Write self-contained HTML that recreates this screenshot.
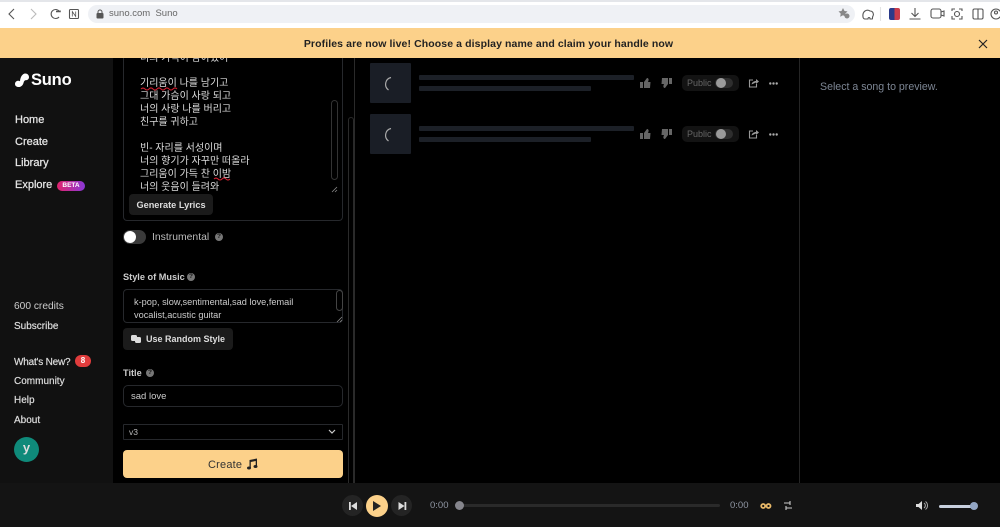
<!DOCTYPE html>
<html><head><meta charset="utf-8"><style>
*{box-sizing:border-box;margin:0;padding:0}
html,body{width:1000px;height:527px;overflow:hidden;background:#000}
body{position:relative;font-family:"Liberation Sans","Noto Sans CJK KR",sans-serif;color:#e8e8e8}
#w{position:absolute;left:0;top:0;width:1000px;height:527px;filter:blur(.3px)}
.a{position:absolute}
.t{position:absolute;white-space:nowrap;line-height:14px}
.nav{font-size:11px;color:#e6e6e6;-webkit-text-stroke:.25px #e6e6e6}
.nav2{font-size:10px;color:#ddd;-webkit-text-stroke:.2px #ddd}
.ly{position:absolute;left:140px;font-size:10px;color:#ddd;white-space:nowrap;line-height:13px}
.box{position:absolute;border:1px solid #26282c;border-radius:4px}
.btn{position:absolute;background:#1b1b1b;border-radius:4px;font-size:9.200px;font-weight:bold;color:#ddd;text-align:center}
.q{position:absolute;width:8px;height:8px;border-radius:50%;background:#777;color:#111;font-size:6.500px;line-height:8px;text-align:center;font-weight:bold}
.sk{position:absolute;background:#1c2027;border-radius:1px}
</style></head><body><div id="w">

<!-- lyrics (under the banner) -->
<div class="a" style="left:123px;top:58px;width:220px;height:163px;border:1px solid #26282c;border-top:0;border-radius:0 0 4px 4px"></div>
<div class="ly" style="top:52px">너의 기억이 남아있어</div>
<div class="ly" style="top:77px">기리움이 나를 남기고</div>
<div class="ly" style="top:90px">그대 가슴이 사랑 되고</div>
<div class="ly" style="top:103px">너의 사랑 나를 버리고</div>
<div class="ly" style="top:116px">친구를 귀하고</div>
<div class="ly" style="top:142px">빈- 자리를 서성이며</div>
<div class="ly" style="top:155px">너의 향기가 자꾸만 떠올라</div>
<div class="ly" style="top:168px">그리움이 가득 찬 이밤</div>
<div class="ly" style="top:181px">너의 웃음이 들려와</div>
<svg class="a" style="left:140px;top:87px" width="38" height="4" fill="none" stroke="#d02030" stroke-width="1.100"><path d="M1 2q2-2 4 0t4 0 4 0 4 0 4 0 4 0 4 0 4 0 4 0"/></svg>
<svg class="a" style="left:213px;top:177px" width="20" height="4" fill="none" stroke="#d02030" stroke-width="1.100"><path d="M1 2q2-2 4 0t4 0 4 0 4 0"/></svg>

<!-- browser chrome -->
<div class="a" style="left:0;top:0;width:1000px;height:28px;background:#fff"></div>
<div class="a" style="left:0;top:0;width:1000px;height:2px;background:#e4e6ea"></div>
<div class="a" style="left:88px;top:5px;width:767px;height:18px;background:#eff1f5;border-radius:9px"></div>
<svg class="a" style="left:0;top:0" width="88" height="28" fill="none" stroke="#555" stroke-width="1.100">
<path d="M14 9 9 14l5 5"/><path d="M31 9l5 5-5 5" stroke="#bbb"/>
<path d="M59 11a4.500 4.500 0 1 0 0 6" /><path d="M56 11.500h4v-1" stroke-width="1.500"/>
<rect x="69.500" y="9.500" width="9" height="9" rx="1"/><path d="M72.300 16.500v-5l3.400 5v-5" stroke-width=".8"/>
</svg>
<svg class="a" style="left:95px;top:9px" width="10" height="10"><rect x="1.500" y="4" width="7" height="5.500" rx="1" fill="#555"/><path d="M3 4.500V3a2 2 0 0 1 4 0v1.500" fill="none" stroke="#555"/></svg>
<div class="t" style="left:109px;top:7px;font-size:9.500px;color:#666">suno.com&nbsp; Suno</div>
<svg class="a" style="left:830px;top:2px" width="170" height="24" fill="none" stroke="#555" stroke-width="1.100">
<path d="M13 6l1.500 3 3 .4-2.200 2.200.5 3.200-2.800-1.500-2.800 1.500.5-3.200L8.500 9.400l3-.4z" fill="#888" stroke="none"/><circle cx="17" cy="14" r="2.500" fill="#888" stroke="none"/>
<path d="M33 15c-1-6 4-8 7-6 3 0 4 3 3 5-1 1 0 3-1 3h-2c0-2-2-2-2 0h-3c-1 0-2-1-2-2z"/>
<path d="M50.500 5v14" stroke="#e4e4e4"/>
<path d="M85 6v8m-3.500-3 3.500 3.500 3.500-3.500M79.500 17h11"/>
<rect x="101" y="7" width="10" height="9" rx="2"/><path d="M111 10l3-1v5l-3-1"/>
<circle cx="127" cy="12" r="2.500"/><path d="M122 9V7h3m4 0h3v2m0 5v3h-3m-4 0h-3v-3"/>
<rect x="143" y="7" width="10" height="10" rx="1.500"/><path d="M148 7v10"/>
<circle cx="166" cy="12" r="5"/><circle cx="166" cy="10.500" r="1.500"/>
</svg>
<div class="a" style="left:889px;top:8px;width:11px;height:12px;background:linear-gradient(90deg,#2a3a8a 50%,#c83c4c 50%);border-radius:2px"></div>

<!-- banner -->
<div class="a" style="left:0;top:28px;width:1000px;height:30px;background:#fcd18a"></div>
<div class="t" style="left:0;top:37px;width:977px;text-align:center;font-size:10.500px;font-weight:bold;color:#222;letter-spacing:.1px">Profiles are now live! Choose a display name and claim your handle now</div>
<svg class="a" style="left:977px;top:38px" width="12" height="12" stroke="#222" stroke-width="1.200"><path d="M2 2l8 8M10 2l-8 8"/></svg>

<!-- sidebar -->
<div class="a" style="left:0;top:58px;width:113px;height:425px;background:#111"></div>
<svg class="a" style="left:14px;top:72px" width="16" height="16" fill="#fff"><path d="M1 12c0-1.900 1.500-3.200 3.300-3.200.7 0 1.200.1 1.700.4C6.300 5 8.500 1.500 11.300 1.500c1.900 0 3.700 1.400 3.700 3.600 0 1.700-1.200 3-2.700 3-1.500 0-2.300.8-2.700 2.500-.6 2.500-2.300 4.400-5 4.400C2.400 15 1 13.800 1 12z"/></svg>
<div class="t" style="left:31px;top:71px;font-size:16.500px;line-height:19px;font-weight:bold;color:#fff;letter-spacing:-.2px">Suno</div>
<div class="t nav" style="left:15px;top:113px">Home</div>
<div class="t nav" style="left:15px;top:135px">Create</div>
<div class="t nav" style="left:15px;top:156px">Library</div>
<div class="t nav" style="left:15px;top:178px">Explore</div>
<div class="a" style="left:57px;top:181px;width:28px;height:10px;border-radius:5px;background:linear-gradient(90deg,#e0246c,#8a38d8);font-size:6.500px;line-height:10px;font-weight:bold;text-align:center;color:#fff">BETA</div>
<div class="t" style="left:14px;top:300px;font-size:10.200px;color:#ccc">600 credits</div>
<div class="t nav2" style="left:14px;top:320px">Subscribe</div>
<div class="t nav2" style="left:14px;top:356px;letter-spacing:-.2px">What's New?</div>
<div class="a" style="left:75px;top:355px;width:16px;height:12px;border-radius:6px;background:#e03c3c;font-size:8px;line-height:12px;font-weight:bold;text-align:center;color:#fff">8</div>
<div class="t nav2" style="left:14px;top:375px">Community</div>
<div class="t nav2" style="left:14px;top:394px">Help</div>
<div class="t nav2" style="left:14px;top:414px">About</div>
<div class="a" style="left:14px;top:437px;width:25px;height:25px;border-radius:50%;background:#0f8a7a;font-size:13px;line-height:22px;font-weight:bold;text-align:center;color:#ddd">y</div>

<!-- lyrics controls -->
<div class="a" style="left:331px;top:100px;width:7px;height:80px;border:1px solid #333;border-radius:4px"></div>
<svg class="a" style="left:331px;top:186px" width="7" height="7" stroke="#888" stroke-width=".8"><path d="M1 6l5-5M4 6l2-2"/></svg>
<div class="btn" style="left:129px;top:194px;width:84px;height:21px;line-height:22px">Generate Lyrics</div>

<!-- instrumental -->
<div class="a" style="left:123px;top:230px;width:23px;height:14px;border-radius:7px;background:#3a3a3a"></div>
<div class="a" style="left:124px;top:231px;width:12px;height:12px;border-radius:50%;background:#fff"></div>
<div class="t" style="left:152px;top:231px;font-size:10.400px;color:#bbb">Instrumental</div>
<div class="q" style="left:215px;top:233px">?</div>

<!-- style -->
<div class="t" style="left:123px;top:270px;font-size:9.200px;font-weight:bold;color:#ccc">Style of Music</div>
<div class="q" style="left:187px;top:273px">?</div>
<div class="box" style="left:123px;top:289px;width:220px;height:34px"></div>
<div class="t" style="left:134px;top:296px;font-size:9.200px;line-height:13px;color:#ccc">k-pop, slow,sentimental,sad love,femail<br>vocalist,acustic guitar</div>
<div class="a" style="left:336px;top:290px;width:7px;height:21px;border:1px solid #444;border-radius:4px"></div>
<svg class="a" style="left:336px;top:316px" width="7" height="7" stroke="#888" stroke-width=".8"><path d="M1 6l5-5M4 6l2-2"/></svg>
<div class="btn" style="left:123px;top:328px;width:110px;height:22px;line-height:23px;padding-left:15px;font-size:9px">Use Random Style</div>
<svg class="a" style="left:131px;top:334px" width="11" height="10" fill="#ddd"><rect x="0" y="1" width="6" height="6" rx="1.500"/><rect x="4" y="3" width="6" height="6" rx="1.500"/></svg>

<!-- title -->
<div class="t" style="left:123px;top:366px;font-size:9.200px;font-weight:bold;color:#ccc">Title</div>
<div class="q" style="left:146px;top:369px">?</div>
<div class="box" style="left:123px;top:385px;width:220px;height:22px;border-radius:5px"></div>
<div class="t" style="left:131px;top:390px;font-size:9.500px;color:#ccc">sad love</div>
<div class="box" style="left:123px;top:424px;width:220px;height:16px;border-radius:1px"></div>
<div class="t" style="left:129px;top:425px;font-size:8.500px;color:#bbb">v3</div>
<svg class="a" style="left:327px;top:428px" width="10" height="8" fill="none" stroke="#ccc" stroke-width="1.200"><path d="M2 2l3 3 3-3"/></svg>
<div class="a" style="left:123px;top:450px;width:220px;height:28px;border-radius:4px;background:#fcd18a"></div>
<div class="t" style="left:208px;top:458px;font-size:11px;color:#333;letter-spacing:.2px">Create</div>
<svg class="a" style="left:246px;top:457px" width="13" height="13" fill="#222"><path d="M3.500 3 11 1.500v8h-1.300V4L4.800 5v6H3.500z"/><ellipse cx="3" cy="11" rx="2" ry="1.500"/><ellipse cx="9.500" cy="9.500" rx="2" ry="1.500"/></svg>

<!-- center divider/scrollbar -->
<div class="a" style="left:348px;top:117px;width:6px;height:372px;border:1px solid #2a2a2a;border-radius:4px"></div>
<div class="a" style="left:354px;top:58px;width:1px;height:425px;background:#2a2a2a"></div>
<div class="a" style="left:799px;top:58px;width:1px;height:425px;background:#252525"></div>

<!-- songs -->
<div class="a" style="left:370px;top:63px;width:41px;height:40px;background:#1a1e26;border-radius:1px"></div>
<svg class="a" style="left:382px;top:75px" width="14" height="18" fill="none" stroke="#aaa" stroke-width="1.200"><path d="M9 2.500A7 7 0 0 0 6.500 15"/></svg>
<div class="sk" style="left:419px;top:75px;width:215px;height:5px"></div>
<div class="sk" style="left:419px;top:86px;width:172px;height:5px"></div>
<svg class="a" style="left:640px;top:77px" width="34" height="12" fill="#666"><path d="M0 5h3v6H0zM4 5l3-4c1 0 2 1 1.500 2.500L8 5h2.500l-.5 6H4z"/><path d="M29 1h3v6h-3zM28 7l-3 4c-1 0-2-1-1.500-2.500L24 7h-2.500l.5-6h6z"/></svg>
<div class="a" style="left:682px;top:75px;width:57px;height:16px;border-radius:5px;background:#131313"></div>
<div class="t" style="left:687px;top:76px;font-size:9px;color:#666">Public</div>
<div class="a" style="left:715px;top:78px;width:18px;height:10px;border-radius:5px;background:#2e2e2e"></div>
<div class="a" style="left:716px;top:78px;width:10px;height:10px;border-radius:50%;background:#9a9a9a"></div>
<svg class="a" style="left:748px;top:78px" width="11" height="10" fill="none" stroke="#999" stroke-width="1.100"><path d="M5 2H1.500v7h7V6"/><path d="M3.500 6.500C4 4 6 3 8 3V1l3 2.500L8 6V4.500" fill="#999" stroke="none"/></svg>
<svg class="a" style="left:769px;top:82px" width="9" height="3" fill="#aaa"><circle cx="1.300" cy="1.500" r="1.200"/><circle cx="4.500" cy="1.500" r="1.200"/><circle cx="7.700" cy="1.500" r="1.200"/></svg>

<div class="a" style="left:370px;top:114px;width:41px;height:40px;background:#1a1e26;border-radius:1px"></div>
<svg class="a" style="left:382px;top:126px" width="14" height="18" fill="none" stroke="#aaa" stroke-width="1.200"><path d="M9 2.500A7 7 0 0 0 6.500 15"/></svg>
<div class="sk" style="left:419px;top:126px;width:215px;height:5px"></div>
<div class="sk" style="left:419px;top:137px;width:172px;height:5px"></div>
<svg class="a" style="left:640px;top:128px" width="34" height="12" fill="#666"><path d="M0 5h3v6H0zM4 5l3-4c1 0 2 1 1.500 2.500L8 5h2.500l-.5 6H4z"/><path d="M29 1h3v6h-3zM28 7l-3 4c-1 0-2-1-1.500-2.500L24 7h-2.500l.5-6h6z"/></svg>
<div class="a" style="left:682px;top:126px;width:57px;height:16px;border-radius:5px;background:#131313"></div>
<div class="t" style="left:687px;top:127px;font-size:9px;color:#666">Public</div>
<div class="a" style="left:715px;top:129px;width:18px;height:10px;border-radius:5px;background:#2e2e2e"></div>
<div class="a" style="left:716px;top:129px;width:10px;height:10px;border-radius:50%;background:#9a9a9a"></div>
<svg class="a" style="left:748px;top:129px" width="11" height="10" fill="none" stroke="#999" stroke-width="1.100"><path d="M5 2H1.500v7h7V6"/><path d="M3.500 6.500C4 4 6 3 8 3V1l3 2.500L8 6V4.500" fill="#999" stroke="none"/></svg>
<svg class="a" style="left:769px;top:133px" width="9" height="3" fill="#aaa"><circle cx="1.300" cy="1.500" r="1.200"/><circle cx="4.500" cy="1.500" r="1.200"/><circle cx="7.700" cy="1.500" r="1.200"/></svg>

<div class="t" style="left:820px;top:80px;font-size:10.600px;color:#7d8694">Select a song to preview.</div>

<!-- player -->
<div class="a" style="left:0;top:483px;width:1000px;height:44px;background:#141414"></div>
<div class="a" style="left:342px;top:495px;width:21px;height:21px;border-radius:50%;background:#242424"></div>
<div class="a" style="left:391px;top:495px;width:21px;height:21px;border-radius:50%;background:#242424"></div>
<div class="a" style="left:366px;top:495px;width:22px;height:22px;border-radius:50%;background:#fcd18a"></div>
<svg class="a" style="left:340px;top:493px" width="76" height="26"><path d="M9 9h1.800v8H9zM17 9v8l-6-4z" fill="#ddd"/><path d="M33 8l8 5-8 5z" fill="#222"/><path d="M58.500 9v8l6-4zM64.500 9h1.800v8h-1.800z" fill="#ddd"/></svg>
<div class="t" style="left:430px;top:499px;font-size:9.500px;color:#8f96a3">0:00</div>
<div class="a" style="left:459px;top:504px;width:261px;height:3px;border-radius:2px;background:#2a2a2a"></div>
<div class="a" style="left:455px;top:501px;width:9px;height:9px;border-radius:50%;background:#85858c"></div>
<div class="t" style="left:730px;top:499px;font-size:9.500px;color:#8f96a3">0:00</div>
<svg class="a" style="left:760px;top:502px" width="12" height="8" fill="none" stroke="#e8b868" stroke-width="1.800"><circle cx="3.200" cy="4" r="2"/><circle cx="8.500" cy="4" r="2"/></svg>
<svg class="a" style="left:784px;top:501px" width="8" height="9" stroke="#ccc" stroke-width="1.100" fill="none"><path d="M0 2h6M2 7h6M6 0v4M2 5v4"/></svg>
<svg class="a" style="left:916px;top:500px" width="13" height="11"><path d="M0 4h2.500L6 1v9L2.500 7H0z" fill="#ddd"/><path d="M8 3a3 3 0 0 1 0 5M9.500 1.500a5 5 0 0 1 0 8" fill="none" stroke="#aaa"/></svg>
<div class="a" style="left:939px;top:505px;width:35px;height:3px;border-radius:2px;background:#c8d0de"></div>
<div class="a" style="left:970px;top:502px;width:8px;height:8px;border-radius:50%;background:#93a6c4"></div>
</div></body></html>
